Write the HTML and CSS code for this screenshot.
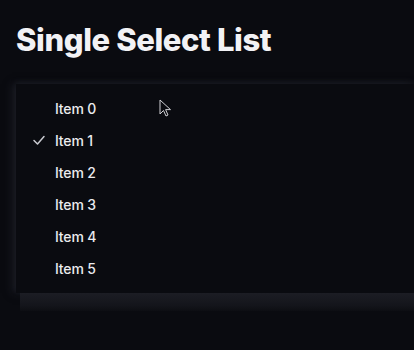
FILE: index.html
```html
<!DOCTYPE html>
<html>
<head>
<meta charset="utf-8">
<link rel="stylesheet" href="styles.css">
</head>
<body>
<h1 class="title">Single Select List</h1>
<div class="list-wrap">
  <ul class="list">
    <li class="item"><span class="check"></span><span class="label">Item 0</span></li>
    <li class="item selected"><span class="check"><svg width="14" height="14" viewBox="0 0 14 14"><path d="M2 7.5 L5.5 11 L12 3.5" fill="none" stroke="#c9cad0" stroke-width="1.5" stroke-linecap="round" stroke-linejoin="round"/></svg></span><span class="label">Item 1</span></li>
    <li class="item"><span class="check"></span><span class="label">Item 2</span></li>
    <li class="item"><span class="check"></span><span class="label">Item 3</span></li>
    <li class="item"><span class="check"></span><span class="label">Item 4</span></li>
    <li class="item"><span class="check"></span><span class="label">Item 5</span></li>
  </ul>
  <div class="band"></div>
</div>
<svg class="cursor" width="14" height="20" viewBox="0 0 14 20"><path d="M1 1 L1 15 L4.5 11.5 L7 17 L9 16 L6.6 10.6 L11.5 10.6 Z" fill="#0a0b10" stroke="#d0d0d4" stroke-width="1"/></svg>
</body>
</html>
```
FILE: styles.css
```css
html, body {
  margin: 0;
  padding: 0;
  background: #0a0b10;
  font-family: Inter, "Noto Sans", sans-serif;
  height: 350px;
  overflow: hidden;
}
body {
  position: relative;
}
.title {
  margin: 0;
  padding: 22px 16px 0 16px;
  font-size: 31px;
  font-weight: 800;
  color: #f2f2f5;
  letter-spacing: -0.4px;
  line-height: 36px;
}
.list-wrap {
  margin: 26px 0 0 16px;
}
.list {
  list-style: none;
  margin: 0;
  padding: 8px 0 9px 0;
  background: #0a0b10;
  box-shadow: -4px 0 8px rgba(40, 42, 52, 0.5), 0 -2px 5px rgba(30, 32, 40, 0.4);
}
.item {
  display: flex;
  align-items: center;
  height: 32px;
  color: #ebebef;
  font-size: 14px;
  font-weight: 500;
  letter-spacing: -0.15px;
}
.check {
  width: 14px;
  height: 14px;
  margin-left: 16px;
  margin-right: 9px;
  display: flex;
}
.band {
  height: 18px;
  background: linear-gradient(#1c1d24, #14151b 70%, #0d0e13);
  margin-left: 4px;
}
.cursor {
  position: absolute;
  left: 159px;
  top: 99px;
}
```
